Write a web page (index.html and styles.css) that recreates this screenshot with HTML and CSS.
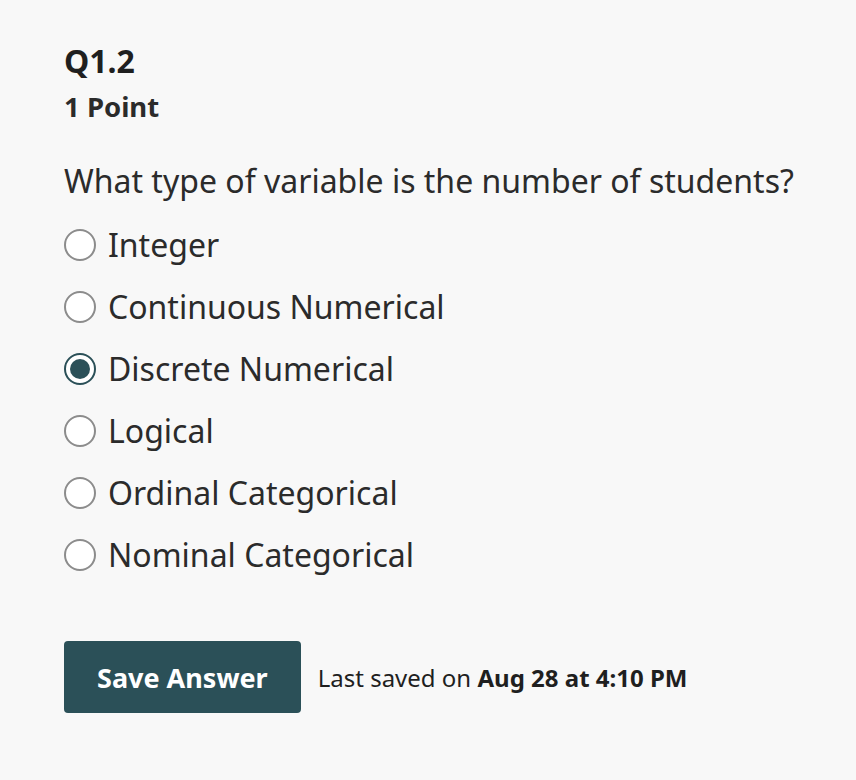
FILE: index.html
```html
<!DOCTYPE html>
<html lang="en">
<head>
    <meta charset="UTF-8">
    <meta name="viewport" content="width=device-width, initial-scale=1.0">
    <title>Q1.2</title>
    <link rel="stylesheet" href="styles.css">
</head>
<body>

    <div class="question">
        <h2 class="question-title">Q1.2</h2>
        <p class="question-points">1 Point</p>

        <p class="question-text">What type of variable is the number of students?</p>

        <div class="options">
            <label class="option"><span class="radio"></span>Integer</label>
            <label class="option"><span class="radio"></span>Continuous Numerical</label>
            <label class="option"><span class="radio checked"></span>Discrete Numerical</label>
            <label class="option"><span class="radio"></span>Logical</label>
            <label class="option"><span class="radio"></span>Ordinal Categorical</label>
            <label class="option"><span class="radio"></span>Nominal Categorical</label>
        </div>

        <div class="actions">
            <button class="save-btn">Save Answer</button>
            <span class="saved">Last saved on <b>Aug 28 at 4:10 PM</b></span>
        </div>
    </div>

</body>
</html>
```

FILE: styles.css
```css
body {
    margin: 0;
    background-color: #f8f8f8;
    font-family: "Noto Sans", "Open Sans", sans-serif;
    color: #2b2b2b;
}

.question {
    padding: 41px 24px 0 64px;
}

.question-title {
    margin: 0;
    font-size: 32px;
    line-height: 40px;
    font-weight: bold;
    color: #1f1f1f;
}

.question-points {
    margin: 9px 0 0 0;
    font-size: 27.5px;
    line-height: 34px;
    font-weight: bold;
    color: #2b2b2b;
}

.question-text {
    margin: 37px 0 0 0;
    font-size: 32px;
    line-height: 40px;
    white-space: nowrap;
}

.options {
    display: flex;
    flex-direction: column;
    gap: 22px;
    margin-top: 24px;
}

.option {
    display: flex;
    align-items: center;
    gap: 12px;
    font-size: 32px;
    line-height: 40px;
    cursor: pointer;
}

.radio {
    width: 28px;
    height: 28px;
    border: 2px solid #8c8c8c;
    border-radius: 50%;
    background-color: #ffffff;
    display: flex;
    align-items: center;
    justify-content: center;
    flex-shrink: 0;
}

.radio.checked {
    border-color: #2b5058;
}

.radio.checked::after {
    content: "";
    width: 20px;
    height: 20px;
    border-radius: 50%;
    background-color: #2b5058;
}

.actions {
    display: flex;
    align-items: center;
    gap: 17px;
    margin-top: 66px;
}

.save-btn {
    height: 72px;
    padding: 0 33px;
    background-color: #2b5058;
    color: white;
    border: none;
    border-radius: 4px;
    font-family: inherit;
    font-size: 27px;
    font-weight: bold;
    cursor: pointer;
}

.saved {
    font-size: 24px;
    color: #1f1f1f;
}
```
